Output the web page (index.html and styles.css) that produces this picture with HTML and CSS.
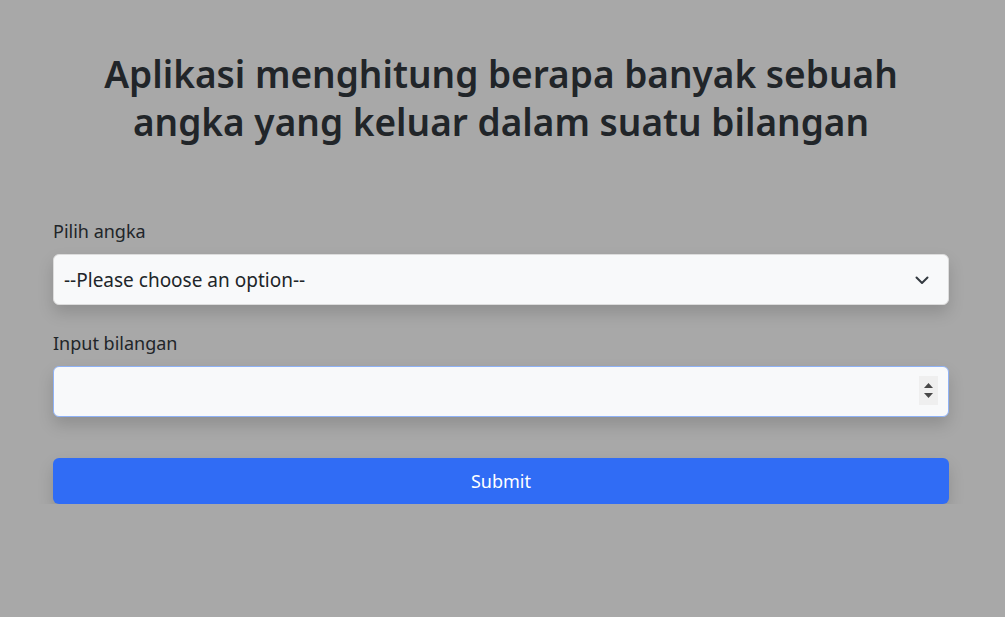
FILE: index.html
```html
<!DOCTYPE html>
<html lang="id">
<head>
    <meta charset="UTF-8">
    <meta name="viewport" content="width=device-width, initial-scale=1.0">
    <link rel="stylesheet" href="styles.css">
    <title>Hitung Angka</title>
</head>
<body>
    <div class="Container">
        <h1 class="Title">Aplikasi menghitung berapa banyak sebuah<br>angka yang keluar dalam suatu bilangan</h1>
        <form class="MainForm">
            <div class="Field">
                <label class="FieldLabel" for="angka">Pilih angka</label>
                <div class="SelectWrap">
                    <select class="FieldSelect" id="angka">
                        <option>--Please choose an option--</option>
                        <option>0</option>
                        <option>1</option>
                        <option>2</option>
                        <option>3</option>
                        <option>4</option>
                        <option>5</option>
                        <option>6</option>
                        <option>7</option>
                        <option>8</option>
                        <option>9</option>
                    </select>
                    <svg class="Chevron" width="14" height="10" viewBox="0 0 14 10">
                        <path d="M1.5 2.5 L7 8 L12.5 2.5" fill="none" stroke="#343a40" stroke-width="2" stroke-linecap="round" stroke-linejoin="round"/>
                    </svg>
                </div>
            </div>
            <div class="Field">
                <label class="FieldLabel" for="bilangan">Input bilangan</label>
                <div class="InputWrap">
                    <input class="FieldInput" id="bilangan" type="text">
                    <div class="Spinner">
                        <svg width="19" height="29" viewBox="0 0 19 29">
                            <path d="M5 12 L9.5 7 L14 12 Z" fill="#474747"/>
                            <path d="M5 17 L9.5 22 L14 17 Z" fill="#474747"/>
                        </svg>
                    </div>
                </div>
            </div>
            <button class="SubmitBtn" type="button">Submit</button>
        </form>
    </div>
</body>
</html>
```

FILE: styles.css
```css
body{
    margin: 0;
    background-color: #a8a8a8;
    color: #212529;
    font-family: 'Noto Sans', 'Open Sans', sans-serif;
}
.Container{
    padding: 50px 56px 0 53px;
}
.Title{
    margin: 0;
    text-align: center;
    font-size: 37px;
    line-height: 48px;
    font-weight: 600;
}
.MainForm{
    margin-top: 73px;
}
.Field{
    margin-bottom: 26px;
}
.FieldLabel{
    display: block;
    font-size: 18px;
    line-height: 24px;
    margin-bottom: 11px;
}
.SelectWrap,
.InputWrap{
    position: relative;
}
.FieldSelect,
.FieldInput{
    display: block;
    width: 100%;
    box-sizing: border-box;
    height: 51px;
    background-color: #f8f9fa;
    border: 1px solid #dcdcdc;
    border-radius: 6px;
    box-shadow: 0 8px 16px rgba(0,0,0,.15);
    color: #212529;
    font-family: inherit;
    font-size: 19px;
    padding: 0 40px 0 10px;
    outline: none;
    appearance: none;
}
.FieldInput{
    border-color: #8fb2f6;
}
.Chevron{
    position: absolute;
    right: 20px;
    top: 21px;
    pointer-events: none;
}
.Spinner{
    position: absolute;
    right: 11px;
    top: 10px;
    width: 19px;
    height: 29px;
    background-color: #efefef;
}
.Spinner svg{
    display: block;
}
.SubmitBtn{
    display: block;
    width: 100%;
    height: 46px;
    margin-top: 41px;
    background-color: #306cf5;
    color: #fff;
    border: none;
    border-radius: 6px;
    box-shadow: 0 8px 16px rgba(0,0,0,.15);
    font-family: inherit;
    font-size: 18px;
}
```
